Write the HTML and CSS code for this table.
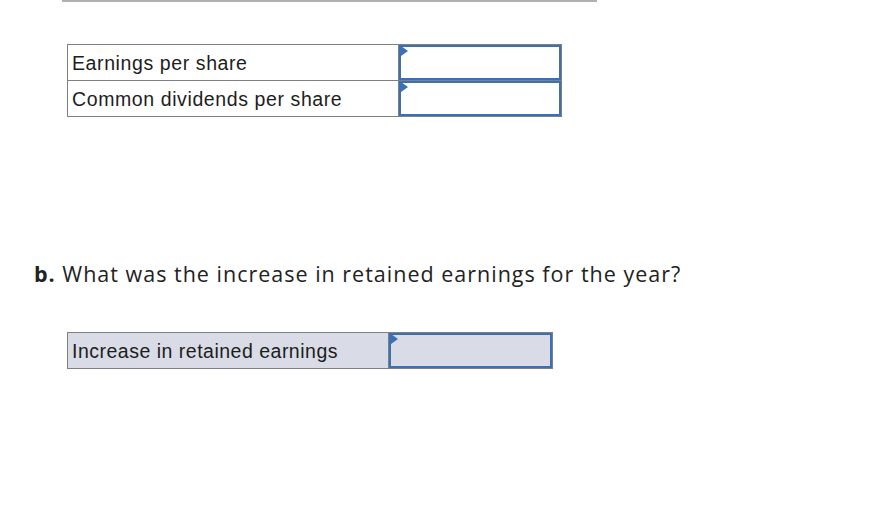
FILE: index.html
```html
<!DOCTYPE html>
<html>
<head>
<meta charset="utf-8">
<link rel="stylesheet" href="styles.css">
</head>
<body>
<div class="rule"></div>
<div class="grid grid-a">
  <div class="cell label">Earnings per share</div>
  <div class="cell input"><span class="flag"></span></div>
  <div class="cell label">Common dividends per share</div>
  <div class="cell input"><span class="flag"></span></div>
</div>
<h2 class="question"><b>b.</b> What was the increase in retained earnings for the year?</h2>
<div class="grid grid-b">
  <div class="cell label shaded">Increase in retained earnings</div>
  <div class="cell input shaded"><span class="flag"></span></div>
</div>
</body>
</html>
```

FILE: styles.css
```css
html, body {
  margin: 0;
  padding: 0;
  background: #ffffff;
}

.rule {
  margin-left: 62px;
  width: 535px;
  height: 2px;
  background: #b0b0b0;
}

.grid {
  display: grid;
  margin-left: 67px;
  width: max-content;
  border-top: 1px solid #808080;
  border-left: 1px solid #808080;
}

.grid-a {
  margin-top: 42px;
  grid-template-columns: 331px 163px;
}

.grid-b {
  margin-top: 43px;
  grid-template-columns: 321px 164px;
}

.cell {
  position: relative;
  height: 35px;
  border-right: 1px solid #808080;
  border-bottom: 1px solid #808080;
  box-sizing: content-box;
}

.label {
  padding: 1px 0 0 4px;
  height: 34px;
  line-height: 34px;
  font-family: "Liberation Sans", Arial, sans-serif;
  font-size: 19.5px;
  letter-spacing: 0.6px;
  color: #1d1d1d;
  white-space: nowrap;
}

.grid-b .label {
  letter-spacing: 0.5px;
}

.grid-a .label { width: 326px; }
.grid-b .label { width: 316px; }

.input {
  box-shadow: inset 0 0 0 2px #3a70b5;
}

.shaded {
  background: #d9dce6;
}

.flag {
  position: absolute;
  left: 2px;
  top: 1px;
  width: 0;
  height: 0;
  border-top: 5px solid transparent;
  border-bottom: 5px solid transparent;
  border-left: 7px solid #3a70b5;
}

.question {
  margin: 142px 0 0 34px;
  font-family: "Open Sans", sans-serif;
  font-size: 21.5px;
  line-height: 30px;
  font-weight: 400;
  letter-spacing: 1px;
  color: #222222;
  white-space: nowrap;
}

.question b {
  font-weight: 700;
}
```
